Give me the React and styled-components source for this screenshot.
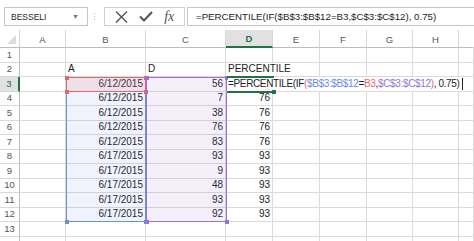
import React from "react";
import styled, { createGlobalStyle } from "styled-components";

const GlobalStyle = createGlobalStyle`
  html, body { margin: 0; padding: 0; background: #fff; }
  body { font-family: "Liberation Sans", Arial, sans-serif; }
`;

const COLS = [
  { key: "A", w: 46 },
  { key: "B", w: 80 },
  { key: "C", w: 80 },
  { key: "D", w: 47 },
  { key: "E", w: 47 },
  { key: "F", w: 47 },
  { key: "G", w: 46 },
  { key: "H", w: 46 },
  { key: "", w: 15 },
];
const ROW_HEAD_W = 20;
const HEAD_H = 18;
const ROW_H = 14.5;

const colX = (i) => ROW_HEAD_W + COLS.slice(0, i).reduce((s, c) => s + c.w, 0);
const rowY = (r) => HEAD_H + (r - 1) * ROW_H;

const Page = styled.div`
  width: 474px;
  height: 241px;
  overflow: hidden;
  background: #fff;
`;

const Toolbar = styled.div`
  height: 30px;
  display: flex;
  align-items: flex-start;
  padding: 7px 0 0 4px;
  box-sizing: border-box;
`;

const NameBox = styled.div`
  width: 84px;
  height: 19px;
  box-sizing: border-box;
  border: 1px solid #c6c6c6;
  display: flex;
  align-items: center;
  justify-content: space-between;
  padding: 0 8px 0 6px;
  font-size: 8.5px;
  color: #262626;
`;

const Arrow = styled.span`
  font-size: 7px;
  color: #777;
`;

const Grip = styled.div`
  width: 12px;
  height: 19px;
  display: flex;
  flex-direction: column;
  align-items: center;
  justify-content: center;
  gap: 2px;
  margin-right: 4px;
  span {
    width: 1px;
    height: 1px;
    background: #b5b5b5;
  }
`;

const ButtonBox = styled.div`
  width: 81px;
  height: 19px;
  box-sizing: border-box;
  border: 1px solid #d0d0d0;
  display: flex;
  align-items: center;
  justify-content: space-around;
  padding: 0 4px;
  margin-right: 2px;
`;

const Fx = styled.span`
  font-family: "Liberation Serif", "Times New Roman", serif;
  font-style: italic;
  font-size: 14px;
  color: #555;
  line-height: 1;
`;

const FormulaBox = styled.div`
  flex: 1;
  height: 19px;
  box-sizing: border-box;
  border: 1px solid #c6c6c6;
  border-right: none;
  display: flex;
  align-items: center;
  padding-left: 8px;
  font-size: 9.7px;
  color: #222;
  white-space: nowrap;
`;

const Sheet = styled.div`
  position: relative;
  display: grid;
  grid-template-columns: ${ROW_HEAD_W}px ${COLS.map((c) => c.w + "px").join(" ")};
  grid-template-rows: ${HEAD_H}px repeat(14, ${ROW_H}px);
  font-size: 10px;
  color: #222;
`;

const Corner = styled.div`
  border-right: 1px solid #d4d4d4;
  border-bottom: 1px solid #bdbdbd;
  position: relative;
  &::after {
    content: "";
    position: absolute;
    right: 3px;
    bottom: 3px;
    border-style: solid;
    border-width: 0 0 9px 9px;
    border-color: transparent transparent #dcdcdc transparent;
  }
`;

const ColHead = styled.div`
  display: flex;
  align-items: center;
  justify-content: center;
  box-sizing: border-box;
  padding-top: 1px;
  border-right: 1px solid ${(p) => (p.$last ? "transparent" : "#d9d9d9")};
  border-bottom: ${(p) => (p.$active ? "2px solid #217346" : "1px solid #bdbdbd")};
  background: ${(p) => (p.$active ? "#e1e1e1" : "#fff")};
  color: ${(p) => (p.$active ? "#217346" : "#555")};
  font-weight: ${(p) => (p.$active ? "bold" : "normal")};
  font-size: 9.5px;
`;

const RowHead = styled.div`
  display: flex;
  align-items: flex-end;
  justify-content: center;
  box-sizing: border-box;
  padding-bottom: 1px;
  line-height: 12px;
  border-bottom: 1px solid #d9d9d9;
  border-right: ${(p) => (p.$active ? "2px solid #217346" : "1px solid #bdbdbd")};
  background: ${(p) => (p.$active ? "#e1e1e1" : "#fff")};
  color: ${(p) => (p.$active ? "#217346" : "#555")};
  font-size: 9.5px;
`;

const Cell = styled.div`
  box-sizing: border-box;
  border-right: 1px solid ${(p) => (p.$open ? "transparent" : "#dadada")};
  border-bottom: 1px solid #dadada;
  display: flex;
  align-items: flex-end;
  justify-content: ${(p) => (p.$num ? "flex-end" : "flex-start")};
  padding: 0 2px 1px;
  line-height: 12px;
  white-space: nowrap;
  overflow: visible;
  position: relative;
  z-index: ${(p) => (p.$edit ? 3 : "auto")};
  min-width: 0;
`;

const EditText = styled.span`
  background: #fff;
  padding-right: 2px;
  border-right: 1px solid #222;
  font-size: 10px;
  letter-spacing: -0.35px;
  line-height: 12px;
`;

const Range = styled.div`
  position: absolute;
  left: ${(p) => p.$x}px;
  top: ${(p) => p.$y}px;
  width: ${(p) => p.$w}px;
  height: ${(p) => p.$h}px;
  box-sizing: border-box;
  border: 1px solid ${(p) => p.$color};
  background: ${(p) => p.$fill};
  pointer-events: none;
  z-index: ${(p) => p.$z};
`;

const Handle = styled.span`
  position: absolute;
  width: 4px;
  height: 4px;
  background: ${(p) => p.$color};
  ${(p) => (p.$top ? "top: -2.5px;" : "bottom: -2.5px;")}
  ${(p) => (p.$left ? "left: -2.5px;" : "right: -2.5px;")}
`;

const Active = styled.div`
  position: absolute;
  left: ${(p) => p.$x}px;
  top: ${(p) => p.$y}px;
  width: ${(p) => p.$w}px;
  height: ${(p) => p.$h}px;
  box-sizing: border-box;
  border-top: 2px solid #217346;
  border-bottom: 2px solid #217346;
  z-index: 4;
  &::after {
    content: "";
    position: absolute;
    right: -2px;
    bottom: -3px;
    width: 4px;
    height: 4px;
    background: #217346;
  }
`;

const Ref = styled.span`
  color: ${(p) => p.$c};
`;

const dates = [
  "6/12/2015", "6/12/2015", "6/12/2015", "6/12/2015", "6/12/2015",
  "6/17/2015", "6/17/2015", "6/17/2015", "6/17/2015", "6/17/2015",
];
const valsC = [56, 7, 38, 76, 83, 93, 9, 48, 93, 92];
const valsD = [null, 76, 76, 76, 76, 93, 93, 93, 93, 93];

const BLUE = "#6a8de0";
const RED = "#e2676b";
const PURPLE = "#9a6fd8";

const FORMULA = "=PERCENTILE(IF($B$3:$B$12=B3,$C$3:$C$12), 0.75)";

const ColoredFormula = () => (
  <>
    =PERCENTILE(IF<Ref $c={RED}>(</Ref>
    <Ref $c={BLUE}>$B$3:$B$12</Ref>=<Ref $c={RED}>B3</Ref>,
    <Ref $c={PURPLE}>$C$3:$C$12</Ref>
    <Ref $c={RED}>)</Ref>, 0.75)
  </>
);

const Corners = ({ color, only }) =>
  ["tl", "tr", "bl", "br"]
    .filter((k) => !only || only.includes(k))
    .map((k) => (
      <Handle key={k} $color={color} $top={k[0] === "t"} $left={k[1] === "l"} />
    ));

function cellContent(row, col) {
  if (row === 2) {
    if (col === 1) return { text: "A" };
    if (col === 2) return { text: "D" };
    if (col === 3) return { text: "PERCENTILE" };
  }
  if (row >= 3 && row <= 12) {
    const i = row - 3;
    if (col === 1) return { text: dates[i], num: true };
    if (col === 2) return { text: valsC[i], num: true };
    if (col === 3) {
      if (row === 3) return { edit: true };
      return { text: valsD[i], num: true };
    }
  }
  return null;
}

export default function App() {
  const rows = Array.from({ length: 14 }, (_, i) => i + 1);
  return (
    <Page>
      <GlobalStyle />
      <Toolbar>
        <NameBox>
          BESSELI
          <Arrow>▼</Arrow>
        </NameBox>
        <Grip>
          <span />
          <span />
          <span />
        </Grip>
        <ButtonBox>
          <svg width="13" height="12" viewBox="0 0 13 12">
            <path d="M1 0.5 L12 11.5 M12 0.5 L1 11.5" stroke="#555" strokeWidth="1.4" fill="none" />
          </svg>
          <svg width="14" height="11" viewBox="0 0 14 11">
            <path d="M1 5.5 L5 9.5 L13 1" stroke="#555" strokeWidth="2" fill="none" />
          </svg>
          <Fx>fx</Fx>
        </ButtonBox>
        <FormulaBox>{FORMULA}</FormulaBox>
      </Toolbar>

      <Sheet>
        <Corner />
        {COLS.map((c, i) => (
          <ColHead key={c.key + i} $active={c.key === "D"} $last={i === COLS.length - 1}>
            {c.key}
          </ColHead>
        ))}
        {rows.map((r) => (
          <React.Fragment key={r}>
            <RowHead $active={r === 3}>{r <= 13 ? r : ""}</RowHead>
            {COLS.map((c, ci) => {
              const content = cellContent(r, ci);
              const open =
                (r === 2 && ci === 3) || (r === 3 && ci >= 3 && ci <= 7);
              return (
                <Cell
                  key={ci}
                  $num={content?.num}
                  $open={open}
                  $edit={content?.edit}
                >
                  {content?.edit ? (
                    <EditText>
                      <ColoredFormula />
                    </EditText>
                  ) : (
                    content?.text
                  )}
                </Cell>
              );
            })}
          </React.Fragment>
        ))}

        <Range $x={colX(1)} $y={rowY(3)} $w={80} $h={ROW_H * 10} $color={BLUE} $fill="rgba(100,120,220,0.09)" $z={1}>
          <Corners color={BLUE} only={["bl", "br"]} />
        </Range>
        <Range $x={colX(1)} $y={rowY(3)} $w={80} $h={ROW_H + 0.5} $color={RED} $fill="rgba(230,120,150,0.16)" $z={2}>
          <Corners color={RED} />
        </Range>
        <Range $x={colX(2)} $y={rowY(3)} $w={81} $h={ROW_H * 10} $color={PURPLE} $fill="rgba(150,110,210,0.1)" $z={2}>
          <Corners color={PURPLE} />
        </Range>
        <Active $x={colX(3) + 1} $y={rowY(3) - 1} $w={47} $h={ROW_H + 2} />
      </Sheet>
    </Page>
  );
}
